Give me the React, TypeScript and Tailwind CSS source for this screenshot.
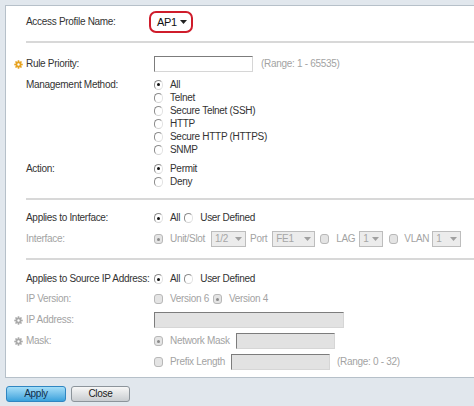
import React from "react";

function Gear({ color }: { color: string }) {
  const teeth = [0, 45, 90, 135, 180, 225, 270, 315];
  return (
    <svg width="9" height="9" viewBox="0 0 10 10">
      {teeth.map((a) => (
        <rect key={a} x="4.1" y="0.3" width="1.8" height="2.6" fill={color} transform={`rotate(${a} 5 5)`} />
      ))}
      <circle cx="5" cy="5" r="3.2" fill={color} />
      <circle cx="5" cy="5" r="1.3" fill="#ffffff" />
    </svg>
  );
}

function Radio({ checked, disabled }: { checked?: boolean; disabled?: boolean }) {
  return (
    <span
      className={
        disabled
          ? "flex shrink-0 items-center justify-center w-[9px] h-[10px] rounded-[3px] border border-[#b8b8b8] bg-[#e4e4e4]"
          : "flex shrink-0 items-center justify-center w-[9px] h-[10px] rounded-full border border-[#8c8c8c] border-r-[#e2e2e2] border-b-[#d4d4d4] bg-white"
      }
    >
      {checked && (
        <span className={disabled ? "block w-[3px] h-[3px] rounded-full bg-[#8a8a8a]" : "block w-[3px] h-[3px] rounded-full bg-[#111111]"} />
      )}
    </span>
  );
}

function Arrow({ color }: { color: string }) {
  return (
    <svg width="7" height="4" viewBox="0 0 7 4">
      <polygon points="0,0 7,0 3.5,4" fill={color} />
    </svg>
  );
}

function DSelect({ value, w }: { value: string; w: string }) {
  return (
    <span className={`flex items-center justify-between h-[16px] border border-[#bdbdbd] bg-[#ececec] pl-[3px] pr-[3px] text-[#a6a6a6] ${w}`}>
      <span>{value}</span>
      <Arrow color="#a0a0a0" />
    </span>
  );
}

function TextBox({ w, disabled, className }: { w: string; disabled?: boolean; className?: string }) {
  return (
    <span
      className={`block shrink-0 h-[16px] border border-t-[#7c7c7c] border-l-[#7c7c7c] border-r-[#d6d6d6] border-b-[#d6d6d6] ${
        disabled ? "bg-[#e2e2e2]" : "bg-white"
      } ${w} ${className ?? ""}`}
    />
  );
}

function Row({
  icon,
  label,
  disabled,
  children,
  className,
}: {
  icon?: React.ReactNode;
  label?: string;
  disabled?: boolean;
  children?: React.ReactNode;
  className: string;
}) {
  return (
    <div className={`flex items-center ${className}`}>
      <div className="flex w-[20px] shrink-0 justify-end pr-[3px]">{icon}</div>
      <div className={`w-[128px] shrink-0 whitespace-nowrap ${disabled ? "text-[#a3a3a3]" : "text-[#333333]"}`}>{label}</div>
      <div className="flex items-center whitespace-nowrap">{children}</div>
    </div>
  );
}

function RadioLine({ label, checked }: { label: string; checked?: boolean }) {
  return (
    <div className="flex h-[13px] items-center">
      <Radio checked={checked} />
      <span className="ml-[7px] text-[#333333]">{label}</span>
    </div>
  );
}

export default function App() {
  return (
    <div
      className="w-[474px] h-[406px] overflow-hidden bg-[#e1e7ed] pt-[5px] text-[10px] tracking-[-0.3px] leading-none"
      style={{ fontFamily: '"Liberation Sans", Arial, sans-serif' }}
    >
      <div className="ml-[5px] flex flex-col border-l border-t border-b border-[#b6c0c9] bg-white pb-[6px]">
        {/* Access Profile Name */}
        <Row label="Access Profile Name:" className="h-[32px]">
          <span className="ml-[-5px] flex h-[22px] w-[44px] items-center justify-between rounded-[7px] border-2 border-[#cf1c2b] pl-[6px] pr-[4px] text-[11px] text-[#111111]">
            <span>AP1</span>
            <Arrow color="#222222" />
          </span>
        </Row>
        <div className="ml-[20px] mt-[3px] h-[2px] bg-[#d8d8d8]" />

        {/* Rule Priority */}
        <Row icon={<Gear color="#e6a21f" />} label="Rule Priority:" className="mt-[12px] h-[18px]">
          <TextBox w="w-[99px]" />
          <span className="ml-[8px] text-[#a3a3a3]">(Range: 1 - 65535)</span>
        </Row>

        {/* Management Method */}
        <div className="mt-[5px] flex items-start">
          <div className="w-[20px] shrink-0" />
          <div className="flex h-[13px] w-[128px] shrink-0 items-center text-[#333333]">Management Method:</div>
          <div className="flex flex-col">
            <RadioLine label="All" checked />
            <RadioLine label="Telnet" />
            <RadioLine label="Secure Telnet (SSH)" />
            <RadioLine label="HTTP" />
            <RadioLine label="Secure HTTP (HTTPS)" />
            <RadioLine label="SNMP" />
          </div>
        </div>

        {/* Action */}
        <div className="mt-[6px] flex items-start">
          <div className="w-[20px] shrink-0" />
          <div className="flex h-[13px] w-[128px] shrink-0 items-center text-[#333333]">Action:</div>
          <div className="flex flex-col">
            <RadioLine label="Permit" checked />
            <RadioLine label="Deny" />
          </div>
        </div>
        <div className="ml-[20px] mt-[10px] h-[2px] bg-[#d8d8d8]" />

        {/* Applies to Interface */}
        <Row label="Applies to Interface:" className="mt-[9px] h-[18px]">
          <Radio checked />
          <span className="ml-[7px] text-[#333333]">All</span>
          <span className="ml-[4px]">
            <Radio />
          </span>
          <span className="ml-[7px] text-[#333333]">User Defined</span>
        </Row>

        {/* Interface */}
        <Row label="Interface:" disabled className="mt-[2px] h-[20px]">
          <Radio checked disabled />
          <span className="ml-[7px] text-[#a3a3a3]">Unit/Slot</span>
          <span className="ml-[6px]">
            <DSelect value="1/2" w="w-[35px]" />
          </span>
          <span className="ml-[4px] text-[#a3a3a3]">Port</span>
          <span className="ml-[5px]">
            <DSelect value="FE1" w="w-[43px]" />
          </span>
          <span className="ml-[5px]">
            <Radio disabled />
          </span>
          <span className="ml-[7px] text-[#a3a3a3]">LAG</span>
          <span className="ml-[4px]">
            <DSelect value="1" w="w-[24px]" />
          </span>
          <span className="ml-[6px]">
            <Radio disabled />
          </span>
          <span className="ml-[6px] text-[#a3a3a3]">VLAN</span>
          <span className="ml-[3px]">
            <DSelect value="1" w="w-[29px]" />
          </span>
        </Row>
        <div className="ml-[20px] mt-[9px] h-[2px] bg-[#d8d8d8]" />

        {/* Applies to Source IP Address */}
        <Row label="Applies to Source IP Address:" className="mt-[10px] h-[18px]">
          <Radio checked />
          <span className="ml-[7px] text-[#333333]">All</span>
          <span className="ml-[4px]">
            <Radio />
          </span>
          <span className="ml-[7px] text-[#333333]">User Defined</span>
        </Row>

        <Row label="IP Version:" disabled className="mt-[2px] h-[18px]">
          <Radio disabled />
          <span className="ml-[7px] text-[#a3a3a3]">Version 6</span>
          <span className="ml-[4px]">
            <Radio checked disabled />
          </span>
          <span className="ml-[7px] text-[#a3a3a3]">Version 4</span>
        </Row>

        <Row icon={<Gear color="#a9a9a9" />} label="IP Address:" disabled className="mt-[3px] h-[18px]">
          <TextBox w="w-[190px]" disabled />
        </Row>

        <Row icon={<Gear color="#a9a9a9" />} label="Mask:" disabled className="mt-[3px] h-[18px]">
          <Radio checked disabled />
          <span className="ml-[7px] text-[#a3a3a3]">Network Mask</span>
          <TextBox w="w-[99px]" disabled className="ml-[6px]" />
        </Row>

        <Row className="mt-[3px] h-[18px]">
          <Radio disabled />
          <span className="ml-[7px] text-[#a3a3a3]">Prefix Length</span>
          <TextBox w="w-[99px]" disabled className="ml-[6px]" />
          <span className="ml-[7px] text-[#a3a3a3]">(Range: 0 - 32)</span>
        </Row>
      </div>

      {/* Buttons */}
      <div className="mt-[8px] flex pl-[6px]">
        <button className="flex h-[16px] w-[60px] items-center justify-center rounded-[3px] border border-[#2f86c2] bg-gradient-to-b from-[#a4def8] to-[#38a2dc] text-[10px] text-[#0e2d4a]">
          Apply
        </button>
        <button className="ml-[5px] flex h-[16px] w-[59px] items-center justify-center rounded-[3px] border border-[#8c949b] bg-gradient-to-b from-[#f7f7f7] to-[#c9cdd1] text-[10px] text-[#1a1a1a]">
          Close
        </button>
      </div>
    </div>
  );
}
